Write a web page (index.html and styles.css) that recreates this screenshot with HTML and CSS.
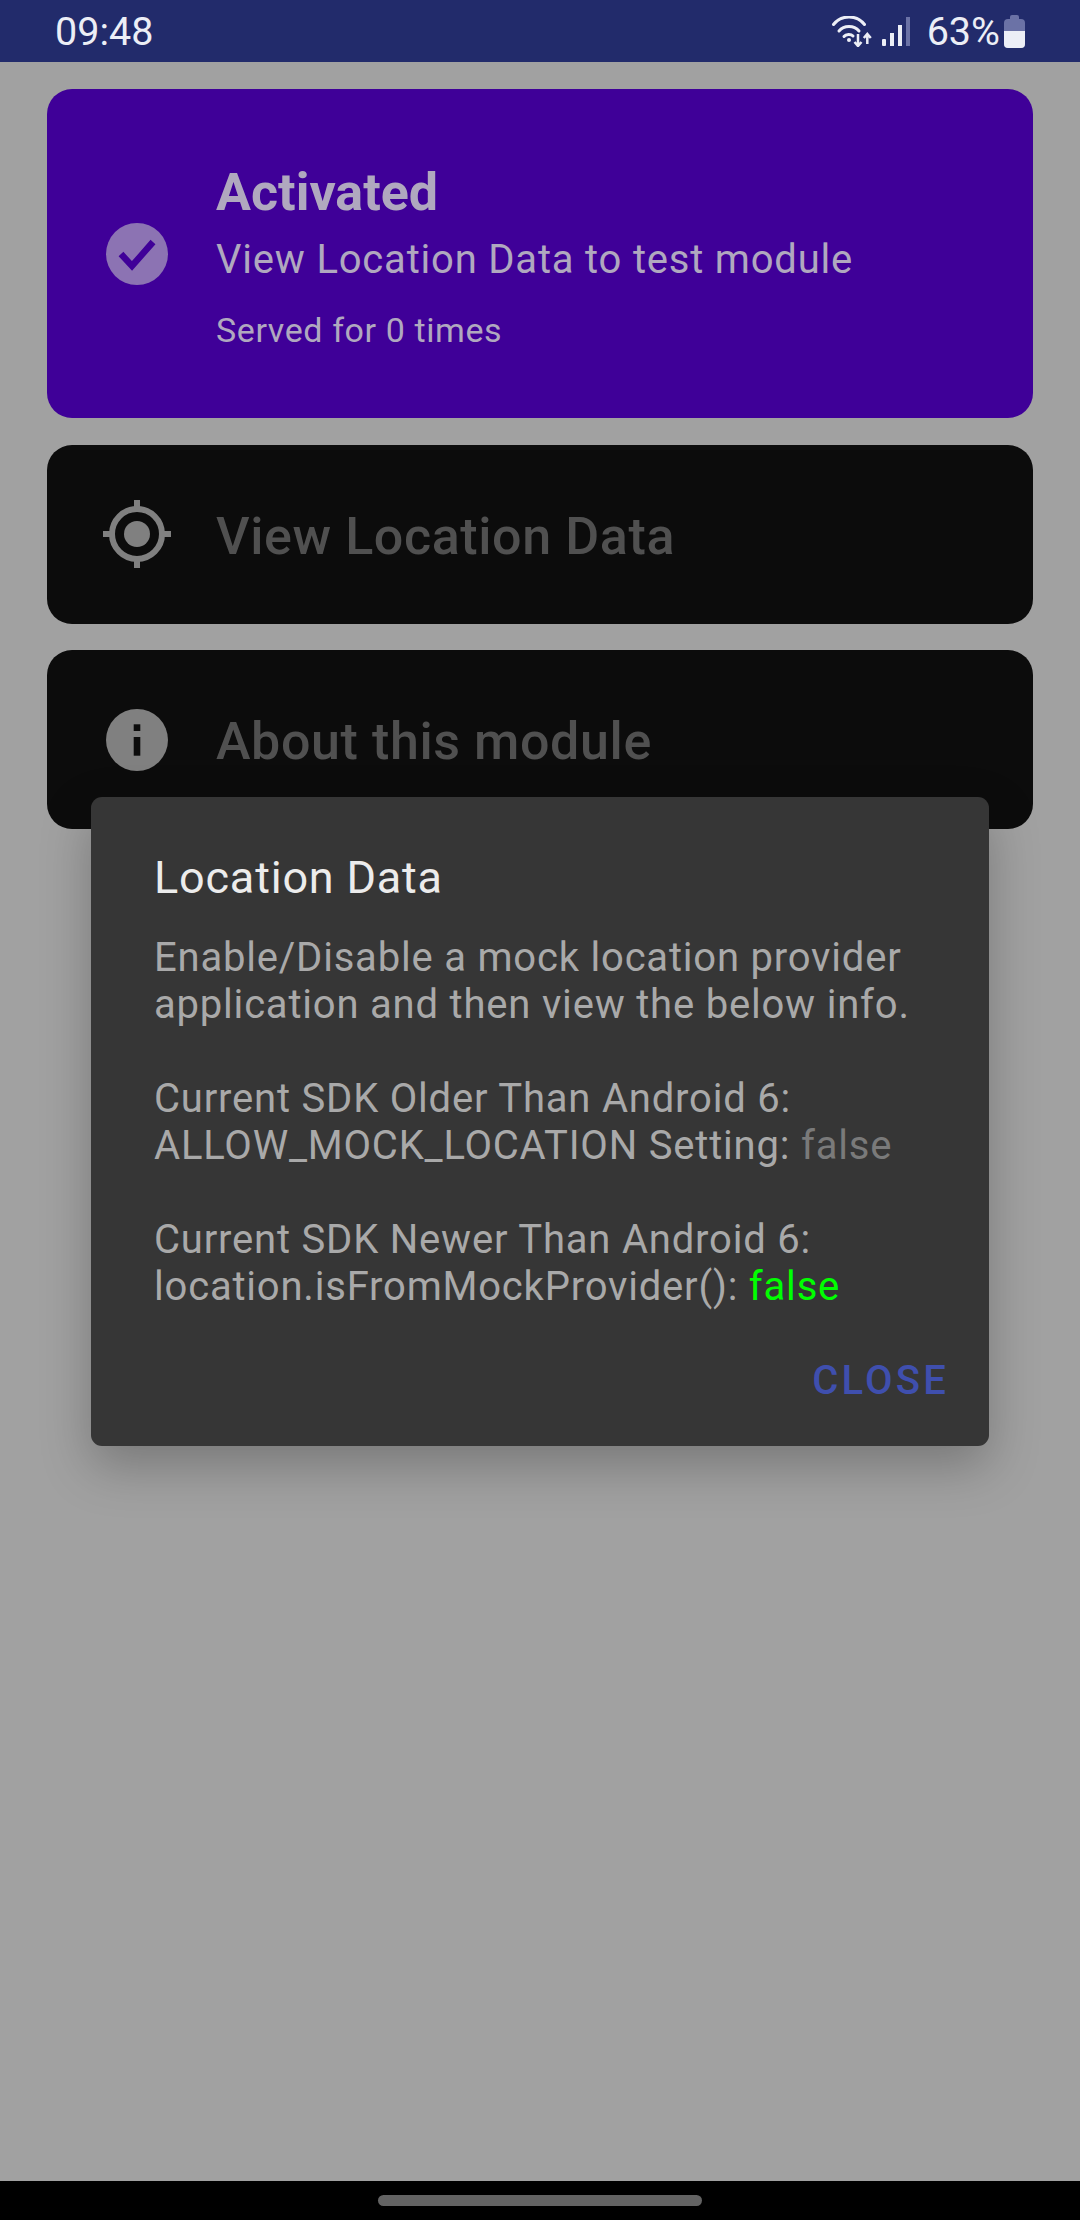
FILE: index.html
```html
<!DOCTYPE html>
<html lang="en">
<head>
  <meta charset="UTF-8" />
  <title>Location Data</title>
  <link rel="stylesheet" href="styles.css">
</head>
<body>
  <div class="status-bar">
    <span class="clock">09:48</span>
    <div class="status-icons">
      <svg class="wifi" viewBox="0 0 41 31" width="41" height="31">
        <g fill="none" stroke="#eceef6" stroke-width="3" stroke-linecap="round">
          <path d="M2.500 8.500 C10 -1.500 26 -1.500 33.500 8.500"/>
          <path d="M8 15 C13 9 23 9 28 15"/>
          <path d="M13 20.500 C15 18 20 18 22 20"/>
        </g>
        <circle cx="18" cy="24" r="2" fill="#eceef6"/>
        <path d="M27 18 V30 M23.500 26 L27 30 L30.500 26 M36.300 28 V18.500 M32.800 22 L36.300 18 L39.800 22" fill="none" stroke="#eceef6" stroke-width="2.500"/>
      </svg>
      <svg class="signal" viewBox="0 0 28 29" width="28" height="29">
        <rect x="0" y="22" width="4" height="7" rx="1" fill="#eceef6"/>
        <rect x="8" y="16" width="4" height="13" fill="#eceef6"/>
        <rect x="16" y="8" width="4" height="21" fill="#eceef6"/>
        <rect x="24" y="0" width="4" height="29" fill="#6b72a6"/>
      </svg>
      <span class="battery-text">63%</span>
      <div class="battery"><div class="battery-level"></div></div>
    </div>
  </div>

  <div class="content">
    <div class="card card-active">
      <svg class="card-icon" viewBox="0 0 62 62" width="62" height="62">
        <circle cx="31" cy="31" r="31" fill="#8c73b3"/>
        <path d="M15 31 L26 43 L47 19" fill="none" stroke="#3f0098" stroke-width="6.500"/>
      </svg>
      <div class="card-text">
        <div class="card-title">Activated</div>
        <div class="card-sub">View Location Data to test module</div>
        <div class="card-small">Served for 0 times</div>
      </div>
    </div>
    <div class="card">
      <svg class="card-icon" viewBox="0 0 68 68" width="68" height="68">
        <circle cx="34" cy="34" r="25" fill="none" stroke="#808080" stroke-width="6"/>
        <circle cx="34" cy="34" r="13" fill="#808080"/>
        <path d="M34 0 V10 M34 58 V68 M0 34 H10 M58 34 H68" stroke="#808080" stroke-width="6"/>
      </svg>
      <div class="card-label">View Location Data</div>
    </div>
    <div class="card">
      <svg class="card-icon" viewBox="0 0 62 62" width="62" height="62">
        <circle cx="31" cy="31" r="31" fill="#808080"/>
        <rect x="27.700" y="15.300" width="6.600" height="6.700" fill="#0c0c0c"/>
        <rect x="27.700" y="28" width="6.600" height="18.700" fill="#0c0c0c"/>
      </svg>
      <div class="card-label">About this module</div>
    </div>
  </div>

  <div class="dialog">
    <h2 class="dialog-title">Location Data</h2>
    <p class="dialog-text">Enable/Disable a mock location provider<br>application and then view the below info.</p>
    <p class="dialog-text">Current SDK Older Than Android 6:<br>ALLOW_MOCK_LOCATION Setting: <span class="value-off">false</span></p>
    <p class="dialog-text">Current SDK Newer Than Android 6:<br>location.isFromMockProvider(): <span class="value-on">false</span></p>
    <div class="dialog-actions"><span class="close-btn">CLOSE</span></div>
  </div>

  <div class="nav-bar"><div class="nav-pill"></div></div>
</body>
</html>
```

FILE: styles.css
```css
html, body {
  height: 100%;
}
body {
  margin: 0;
  font-family: Roboto, sans-serif;
  background-color: #a1a1a1;
  display: flex;
  flex-direction: column;
  position: relative;
}

/* status bar */
.status-bar {
  height: 62px;
  background-color: #222b6b;
  color: #eceef6;
  display: flex;
  align-items: center;
  justify-content: space-between;
  padding: 0 55px;
  font-size: 39.500px;
}
.status-icons {
  display: flex;
  align-items: center;
}
.wifi {
  margin-right: 10px;
}
.signal {
  margin-right: 17px;
}
.battery {
  width: 21px;
  height: 29px;
  margin-left: 4px;
  margin-top: 4px;
  background-color: #6b72a6;
  border-radius: 4px;
  display: flex;
  align-items: flex-end;
  position: relative;
}
.battery:before {
  content: "";
  position: absolute;
  top: -4px;
  left: 6px;
  width: 9px;
  height: 4px;
  background-color: #6b72a6;
  border-radius: 2px 2px 0 0;
}
.battery-level {
  width: 100%;
  height: 17px;
  background-color: #eceef6;
  border-radius: 0 0 4px 4px;
}

/* cards */
.content {
  flex: 1;
  padding: 27px 47px;
  display: flex;
  flex-direction: column;
  gap: 26.500px;
}
.card {
  height: 179px;
  background-color: #0c0c0c;
  border-radius: 25px;
  display: flex;
  align-items: center;
  padding-left: 56px;
  gap: 45px;
  color: #505050;
}
.card-active {
  height: 329px;
  background-color: #3f0098;
  color: #b0a8bf;
  padding-left: 59px;
  gap: 48px;
}
.card-text {
  padding-top: 5px;
}
.card-title {
  font-size: 52px;
  font-weight: 700;
}
.card-sub {
  font-size: 40px;
  letter-spacing: 0.8px;
  margin-top: 13px;
}
.card-small {
  font-size: 34px;
  letter-spacing: 0.6px;
  margin-top: 27px;
}
.card-label {
  font-size: 52px;
  font-weight: 500;
  letter-spacing: 0.6px;
  padding-top: 4px;
}
.card:last-child .card-icon {
  margin-left: 3px;
  margin-right: 3px;
}

/* dialog */
.dialog {
  position: absolute;
  top: 797px;
  left: 91px;
  width: 898px;
  height: 649px;
  box-sizing: border-box;
  background-color: #363636;
  border-radius: 11px;
  padding: 54px 40px 0 63px;
  box-shadow: 0 20px 50px rgba(0,0,0,0.25);
}
.dialog-title {
  margin: 0 0 30px;
  font-size: 45px;
  font-weight: 400;
  letter-spacing: 0.8px;
  color: #ececec;
}
.dialog-text {
  margin: 0 0 47px;
  font-size: 40px;
  line-height: 47px;
  letter-spacing: 0.8px;
  color: #a9a9a9;
}
.value-off {
  color: #7a7a7a;
}
.value-on {
  color: #00ff00;
}
.dialog-actions {
  display: flex;
  justify-content: flex-end;
}
.close-btn {
  font-size: 40px;
  line-height: 47px;
  font-weight: 500;
  letter-spacing: 3.200px;
  color: #3f4fae;
}

/* navigation bar */
.nav-bar {
  height: 39px;
  background-color: #000;
  display: flex;
  justify-content: center;
  padding-top: 14px;
  box-sizing: border-box;
}
.nav-pill {
  width: 324px;
  height: 11px;
  border-radius: 6px;
  background-color: #636363;
}
```
